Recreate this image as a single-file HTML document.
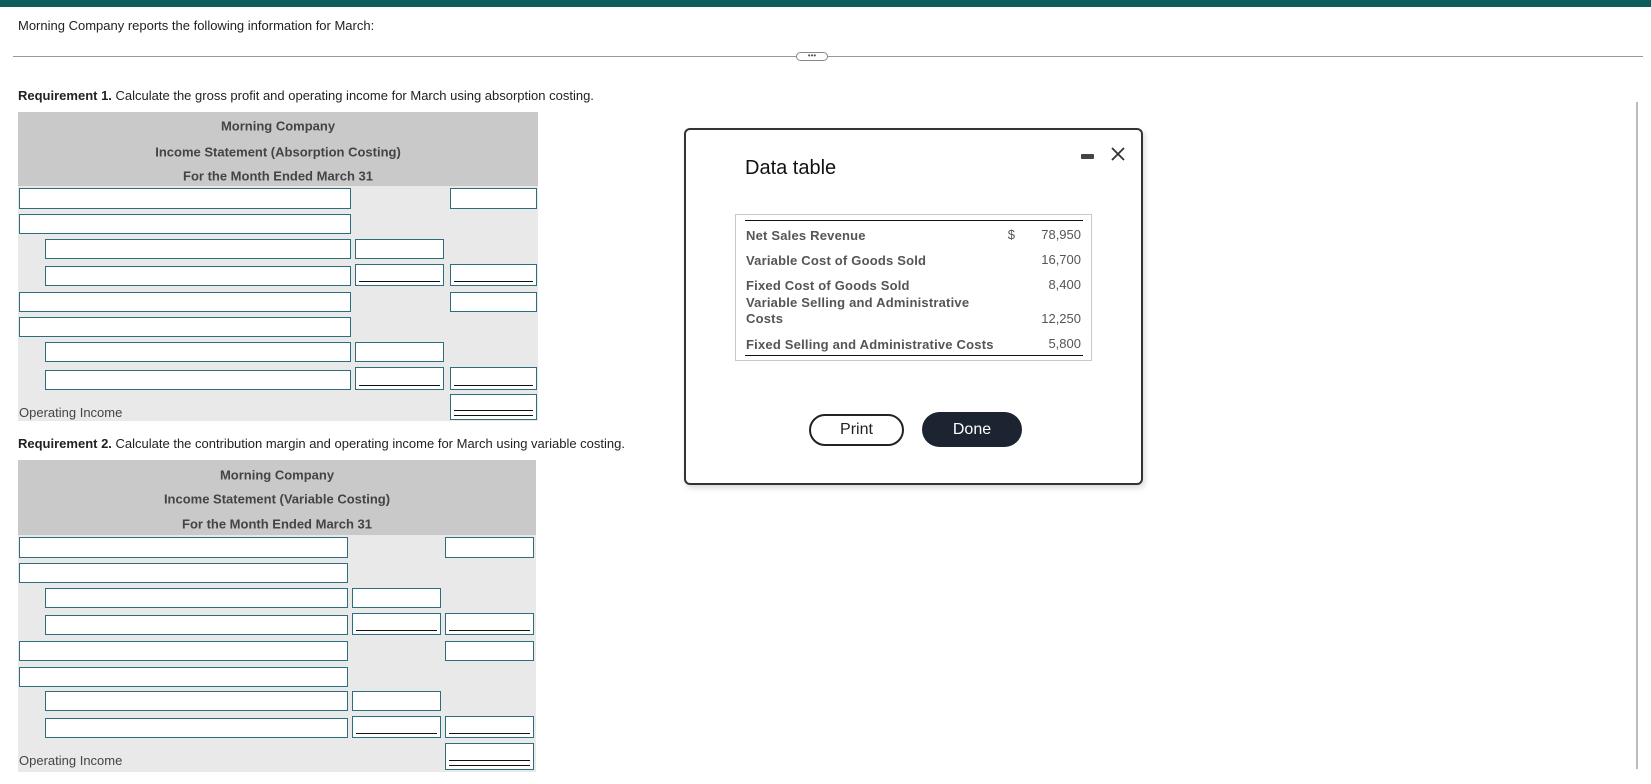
<!DOCTYPE html>
<html><head><meta charset="utf-8"><style>
*{margin:0;padding:0;box-sizing:border-box}
body{width:1651px;height:784px;position:relative;background:#fff;font-family:"Liberation Sans",Arial,sans-serif;overflow:hidden;color:#222}
.a{position:absolute}
.t{font-size:13px;white-space:nowrap}
.hd{background:#c9c9c9}
.bd{background:#e9e9e9}
.b{position:absolute;background:#fff;border:1px solid #2c6e7e}
.u::after{content:"";position:absolute;left:3px;right:3px;bottom:3px;border-bottom:1px solid #111}
.d::after{content:"";position:absolute;left:3px;right:3px;bottom:3px;height:4px;border-top:1px solid #111;border-bottom:1px solid #111}
.hl{position:absolute;left:0;width:100%;text-align:center;font-size:13px;color:#444;font-weight:bold;transform:translateY(-50%)}
.dl{position:absolute;font-size:13px;color:#555;font-weight:bold;letter-spacing:.2px}
.dn{position:absolute;font-size:13px;color:#555;right:0;text-align:right}
</style></head><body>
<div class="a" style="left:0;top:0;width:1651px;height:7px;background:#0c5d5b"></div>
<div class="a t" style="left:18px;top:18px;color:#222">Morning Company reports the following information for March:</div>
<div class="a" style="left:13px;top:56px;width:1630px;height:1px;background:#999"></div>
<div class="a" style="left:796px;top:52px;width:32px;height:9px;border:1px solid #888;border-radius:5px;background:#fff;font-size:8px;line-height:5px;text-align:center;color:#555">•••</div>
<div class="a" style="left:1636px;top:102px;width:2px;height:667px;background:#bbb"></div>

<div class="a t" style="left:18px;top:88px"><b>Requirement 1.</b> Calculate the gross profit and operating income for March using absorption costing.</div>
<div class="a hd" style="left:18px;top:112px;width:520px;height:74px">
<div class="hl" style="top:14px">Morning Company</div>
<div class="hl" style="top:40px">Income Statement (Absorption Costing)</div>
<div class="hl" style="top:64px">For the Month Ended March 31</div>
</div>
<div class="a bd" style="left:18px;top:186px;width:520px;height:235px"></div>
<div class="b" style="left:19px;top:188px;width:332px;height:21px"></div>
<div class="b" style="left:450px;top:188px;width:87px;height:21px"></div>
<div class="b" style="left:19px;top:214px;width:332px;height:20px"></div>
<div class="b" style="left:45px;top:239px;width:306px;height:20px"></div>
<div class="b" style="left:355px;top:239px;width:89px;height:20px"></div>
<div class="b" style="left:45px;top:266px;width:306px;height:20px"></div>
<div class="b u" style="left:355px;top:264px;width:89px;height:22px"></div>
<div class="b u" style="left:450px;top:264px;width:87px;height:22px"></div>
<div class="b" style="left:19px;top:292px;width:332px;height:20px"></div>
<div class="b" style="left:450px;top:292px;width:87px;height:20px"></div>
<div class="b" style="left:19px;top:317px;width:332px;height:20px"></div>
<div class="b" style="left:45px;top:342px;width:306px;height:20px"></div>
<div class="b" style="left:355px;top:342px;width:89px;height:20px"></div>
<div class="b" style="left:45px;top:370px;width:306px;height:20px"></div>
<div class="b u" style="left:355px;top:367px;width:89px;height:23px"></div>
<div class="b u" style="left:450px;top:367px;width:87px;height:23px"></div>
<div class="b d" style="left:450px;top:394px;width:87px;height:26px"></div>
<div class="a t" style="left:19px;top:405px;color:#444">Operating Income</div>

<div class="a t" style="left:18px;top:436px"><b>Requirement 2.</b> Calculate the contribution margin and operating income for March using variable costing.</div>
<div class="a hd" style="left:18px;top:460px;width:518px;height:75px">
<div class="hl" style="top:15px">Morning Company</div>
<div class="hl" style="top:39px">Income Statement (Variable Costing)</div>
<div class="hl" style="top:64px">For the Month Ended March 31</div>
</div>
<div class="a bd" style="left:18px;top:535px;width:518px;height:237px"></div>
<div class="b" style="left:19px;top:537px;width:329px;height:21px"></div>
<div class="b" style="left:445px;top:537px;width:89px;height:21px"></div>
<div class="b" style="left:19px;top:563px;width:329px;height:20px"></div>
<div class="b" style="left:45px;top:588px;width:303px;height:20px"></div>
<div class="b" style="left:352px;top:588px;width:89px;height:20px"></div>
<div class="b" style="left:45px;top:615px;width:303px;height:20px"></div>
<div class="b u" style="left:352px;top:613px;width:89px;height:22px"></div>
<div class="b u" style="left:445px;top:613px;width:89px;height:22px"></div>
<div class="b" style="left:19px;top:641px;width:329px;height:20px"></div>
<div class="b" style="left:445px;top:641px;width:89px;height:20px"></div>
<div class="b" style="left:19px;top:667px;width:329px;height:20px"></div>
<div class="b" style="left:45px;top:691px;width:303px;height:20px"></div>
<div class="b" style="left:352px;top:691px;width:89px;height:20px"></div>
<div class="b" style="left:45px;top:718px;width:303px;height:20px"></div>
<div class="b u" style="left:352px;top:716px;width:89px;height:22px"></div>
<div class="b u" style="left:445px;top:716px;width:89px;height:22px"></div>
<div class="b d" style="left:445px;top:743px;width:89px;height:27px"></div>
<div class="a t" style="left:19px;top:753px;color:#444">Operating Income</div>

<div class="a" style="left:684px;top:128px;width:459px;height:357px;border:2px solid #333;border-radius:6px;background:#fff;box-shadow:2px 3px 6px rgba(0,0,0,.15)">
<div class="a" style="left:59px;top:27px;font-size:20px;color:#111">Data table</div>
<div class="a" style="left:395px;top:24px;width:13px;height:5px;background:#444;border-radius:1px"></div>
<svg class="a" style="left:424px;top:16px" width="16" height="16" viewBox="0 0 16 16"><path d="M2 2L14 14M14 2L2 14" stroke="#333" stroke-width="1.8"/></svg>
<div class="a" style="left:49px;top:84px;width:357px;height:147px;border:1px solid #c8c8c8">
<div class="a" style="left:9px;top:5px;width:338px;height:1px;background:#111"></div>
<div class="a" style="left:9px;top:140px;width:338px;height:1px;background:#111"></div>
<div class="a" style="left:10px;top:-4px;width:335px;height:140px">
<div class="dl" style="top:17px">Net Sales Revenue</div>
<div class="dl" style="top:42px">Variable Cost of Goods Sold</div>
<div class="dl" style="top:67px">Fixed Cost of Goods Sold</div>
<div class="dl" style="top:84px;line-height:16px">Variable Selling and Administrative<br>Costs</div>
<div class="dl" style="top:126px">Fixed Selling and Administrative Costs</div>
<div class="dn" style="right:66px;top:16px">$</div>
<div class="dn" style="top:16px">78,950</div>
<div class="dn" style="top:41px">16,700</div>
<div class="dn" style="top:66px">8,400</div>
<div class="dn" style="top:100px">12,250</div>
<div class="dn" style="top:125px">5,800</div>
</div>
</div>
<div class="a" style="left:123px;top:284px;width:95px;height:32px;border:2px solid #222;border-radius:16px;text-align:center;line-height:28px;font-size:16px;color:#222">Print</div>
<div class="a" style="left:236px;top:282px;width:100px;height:35px;background:#1c2431;border-radius:18px;text-align:center;line-height:35px;font-size:16px;color:#fff">Done</div>
</div>
</body></html>
